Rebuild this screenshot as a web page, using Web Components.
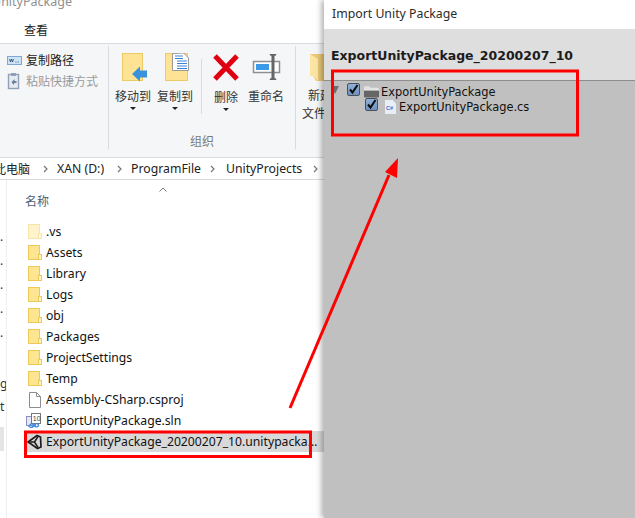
<!DOCTYPE html>
<html>
<head>
<meta charset="utf-8">
<style>
  html, body { margin: 0; padding: 0; background: #fff; }
  body { width: 635px; height: 518px; overflow: hidden; position: relative; font-family: "Noto Sans", "Noto Sans CJK SC", sans-serif; }
  #page { display: flex; width: 635px; height: 518px; }
</style>
</head>
<body>
<div id="page">
  <explorer-window>
    <ribbon-tool slot="tools" style="width:42px" label="移动到" menu>
      <svg width="30" height="30" viewBox="0 0 30 30"><rect x="4.500" y=".5" width="20" height="27" fill="#fde393" stroke="#eccb67"/><path d="M14 21l8-7.500v4h7v7h-7v4z" fill="#3a92dc"/></svg>
    </ribbon-tool>
    <ribbon-tool slot="tools" style="width:42px" label="复制到" menu>
      <svg width="30" height="30" viewBox="0 0 30 30"><rect x="5.500" y=".5" width="22" height="27" fill="#fde393" stroke="#eccb67"/><path d="M14.500.5h-2v17h16V5l-5-5z" fill="#fff" stroke="#9a9a9a"/><path d="M15 3h8M15 5.500h8M17 8h10M17 10.500h10M17 13h10M17 15.500h10" stroke="#3a82d0"/></svg>
    </ribbon-tool>
    <ribbon-tool slot="tools" style="width:40px;margin-left:10px" label="删除" menu shift>
      <svg width="28" height="30" viewBox="0 0 28 30"><path d="M3 3l22 23M25 3L3 26" stroke="#e10011" stroke-width="5"/></svg>
    </ribbon-tool>
    <ribbon-tool slot="tools" style="width:40px" label="重命名">
      <svg width="30" height="30" viewBox="0 0 30 30"><rect x="2.500" y="8.500" width="26" height="11" fill="#fff" stroke="#8f8f8f" stroke-width="1.500"/><rect x="5" y="11" width="13" height="6" fill="#3c9ae8"/><path d="M19 1.500h6l-2 2v21l2 2h-6l2-2v-21z" fill="#666" stroke="#666"/></svg>
    </ribbon-tool>
    <file-row kind="faded">.vs</file-row>
    <file-row>Assets</file-row>
    <file-row>Library</file-row>
    <file-row>Logs</file-row>
    <file-row>obj</file-row>
    <file-row>Packages</file-row>
    <file-row>ProjectSettings</file-row>
    <file-row>Temp</file-row>
    <file-row kind="doc">Assembly-CSharp.csproj</file-row>
    <file-row kind="sln">ExportUnityPackage.sln</file-row>
    <file-row kind="unity" selected>ExportUnityPackage_20200207_10.unitypackage</file-row>
  </explorer-window>
  <import-panel title-text="Import Unity Package" package="ExportUnityPackage_20200207_10">
    <tree-row kind="folder" arrow>ExportUnityPackage</tree-row>
    <tree-row kind="cs" indent>ExportUnityPackage.cs</tree-row>
  </import-panel>
</div>
<red-marks></red-marks>
<script>
const FONT = `"Noto Sans", "Noto Sans CJK SC", sans-serif`;

class RibbonTool extends HTMLElement {
  constructor() {
    super();
    const root = this.attachShadow({mode: 'open'});
    const shift = this.hasAttribute('shift') ? 1 : 0;
    root.innerHTML = `
      <style>
        :host { display: flex; flex-direction: column; align-items: center; flex: none; padding-top: 9px; }
        .icon { height: 30px; display: flex; justify-content: center; }
        .label { margin-top: ${6 + shift}px; font: 12px/16px ${FONT}; color: #333; white-space: nowrap; }
        .menu { width: 0; height: 0; margin-top: 2px; border: 3px solid transparent; border-top: 3px solid #222; border-bottom: 0; }
      </style>
      <div class="icon"><slot></slot></div>
      <div class="label">${this.getAttribute('label')}</div>
      ${this.hasAttribute('menu') ? '<div class="menu"></div>' : ''}
    `;
  }
}
customElements.define('ribbon-tool', RibbonTool);

const FILE_ICONS = {
  folder: `<svg width="14" height="16" viewBox="0 0 14 16"><rect x=".5" y=".5" width="11" height="14" fill="#fee592" stroke="#edc957"/><rect x="10.500" y="9.500" width="3" height="5" fill="#fff3c4" stroke="#edc957"/></svg>`,
  faded: `<svg width="14" height="16" viewBox="0 0 14 16"><rect x=".5" y=".5" width="11" height="14" fill="#fff3cb" stroke="#f6e4a8"/><rect x="10.500" y="9.500" width="3" height="5" fill="#fff8e2" stroke="#f6e4a8"/></svg>`,
  doc: `<svg width="14" height="16" viewBox="0 0 14 16"><path d="M1.500.5h7l4 4v11h-11z" fill="#fff" stroke="#8d8d8d"/><path d="M8.500.5v4h4" fill="none" stroke="#8d8d8d"/></svg>`,
  sln: `<svg width="16" height="16" viewBox="0 0 16 16" style="margin-left:-2px"><rect x=".5" y="3.500" width="9" height="9" fill="#e3e9f7" stroke="#8b8fc0"/><rect x="5.500" y=".5" width="9" height="10" fill="#fff" stroke="#777"/><text x="6.800" y="8" font-family="Liberation Sans" font-size="7" fill="#444">10</text><path d="M4 12c2-2.500 3-.5 4.500 1s4 1 4-.8-2.500-2.200-4-.2-3 3-4.500 2-1.200-1-0-2" fill="none" stroke="#3c87e0" stroke-width="1.400"/></svg>`,
  unity: `<svg width="15" height="16" viewBox="0 0 15 16" style="margin-left:-1px"><path d="M1 8L10 1.500l3.500 1.500 .5 10-3.500 1.500z" fill="none" stroke="#1d1d1d" stroke-width="1.700"/><path d="M7.500 8h-5M7.500 8l3.500-5.500M7.500 8l3.500 5.500" stroke="#1d1d1d" stroke-width="1.500"/></svg>`
};

class FileRow extends HTMLElement {
  constructor() {
    super();
    const root = this.attachShadow({mode: 'open'});
    const kind = this.getAttribute('kind') || 'folder';
    root.innerHTML = `
      <style>
        :host { display: flex; align-items: center; height: 21px; padding-left: 4px; gap: 4px; color: #111; font: 12.200px/21px ${FONT}; }
        :host([selected]) { background: #d9d9d9; }
        .ico { width: 14px; height: 16px; flex: none; display: flex; }
        .name { min-width: 0; width: 273px; white-space: nowrap; overflow: hidden; text-overflow: ellipsis; }
      </style>
      <span class="ico">${FILE_ICONS[kind]}</span>
      <span class="name"><slot></slot></span>
    `;
  }
}
customElements.define('file-row', FileRow);

const CHEVRON = '<svg viewBox="0 0 5 8"><path d="M1 1l3 3-3 3" fill="none" stroke="#777" stroke-width="1.200"/></svg>';

class ExplorerWindow extends HTMLElement {
  constructor() {
    super();
    const root = this.attachShadow({mode: 'open'});
    root.innerHTML = `
      <style>
        :host { display: flex; flex-direction: column; flex: none; width: 324px; height: 518px; overflow: hidden; background: #fff; color: #222; font-family: ${FONT}; }
        .title { height: 18px; flex: none; overflow: hidden; color: #8f8f8f; font-size: 12.500px; line-height: 16px; white-space: nowrap; }
        .title span { display: block; margin: -6px 0 0 -8px; }
        .tabs { height: 26px; flex: none; box-sizing: border-box; border-bottom: 1px solid #dadbdc; padding-left: 24px; font-size: 12px; line-height: 25px; }
        .ribbon { height: 114px; flex: none; box-sizing: border-box; display: flex; background: #f5f6f7; border-bottom: 1px solid #dadbdc; }
        .group { flex: none; box-sizing: border-box; margin: 2px 0 8px; border-right: 1px solid #dadbdc; display: flex; flex-direction: column; }
        .clip { width: 109px; padding: 4px 0 0 7px; font-size: 12px; line-height: 21px; }
        .clip div { display: flex; align-items: center; gap: 4px; height: 21px; }
        .clip .off { color: #9a9a9a; }
        .clip svg { width: 15px; height: 17px; flex: none; }
        .org { width: 187px; }
        .tools { display: flex; flex: 1; padding-left: 3px; position: relative; margin-top: -2px; }
        .tools::after { content: ""; position: absolute; left: 92px; top: 15px; width: 1px; height: 55px; background: #dadbdc; }
        .cap { text-align: center; color: #7b7b7b; font-size: 12px; line-height: 16px; margin-bottom: -1px; }
        .new { width: 40px; padding: 9px 0 0 6px; font-size: 12px; color: #333; }
        .new svg { display: block; margin: 0 0 1px 8px; }
        .new div:first-of-type { padding-left: 6px; margin-top: 5px; }
        .new div { white-space: nowrap; line-height: 18px; }
        .crumbs { height: 22px; flex: none; box-sizing: border-box; display: flex; align-items: center; border-bottom: 1px solid #dadbdc; font-size: 12.250px; color: #222; white-space: nowrap; }
        .crumbs svg { width: 5px; height: 8px; flex: none; margin: 0 9px; }
        .crumbs .pc { margin: 0 3px 0 -6px; font-size: 12px; width: 37px; flex: none; }
        .crumbs .xan { padding-right: 4px; }
        .crumbs .up { margin-left: 2px; padding-right: 2px; }
        .content { flex: 1; display: flex; min-height: 0; }
        nav { width: 6px; flex: none; border-right: 1px solid #eee; padding-top: 45px; font-size: 12px; color: #333; overflow: hidden; }
        nav div { height: 24px; line-height: 24px; white-space: nowrap; }
        nav .sel { background: #e5e5e5; width: 4px; margin-top: 8px; }
        .list { flex: 1; min-width: 0; padding-left: 17px; }
        .sort { height: 12px; display: flex; justify-content: center; padding: 7px 23px 0 0; box-sizing: border-box; }
        .head { height: 29px; color: #4c607a; font-size: 12px; line-height: 20px; padding-left: 1px; }
      </style>
      <div class="title"><span>UnityPackage</span></div>
      <div class="tabs">查看</div>
      <div class="ribbon">
        <div class="group clip">
          <div><svg viewBox="0 0 15 17"><rect x=".5" y="4.500" width="14" height="8" fill="#cfe3f7" stroke="#7fa7d0"/><path d="M2.500 7l1 3 1-3 1 3 1-3M8.500 10h1M10.800 10h1" fill="none" stroke="#25405f" stroke-width=".8"/></svg>复制路径</div>
          <div class="off"><svg viewBox="0 0 15 17"><rect x="1.500" y="1.500" width="10" height="14" fill="#e6ebf2" stroke="#8fa0b8" stroke-width="1.400"/><rect x="4" y="0" width="5" height="3" fill="#8fa0b8"/><path d="M4.500 9l3-3v2h2v2h-2l-1 2z" fill="#6f8199"/></svg>粘贴快捷方式</div>
        </div>
        <div class="group org">
          <div class="tools"><slot name="tools"></slot></div>
          <div class="cap">组织</div>
        </div>
        <div class="new">
          <svg width="20" height="29" viewBox="0 0 20 29"><path d="M0 1h20v27H6l-3-5H0z" fill="#e9c877"/><path d="M0 1l8 5v22l-5-5H0z" fill="#fce4a3"/></svg>
          <div>新建</div>
          <div>文件夹</div>
        </div>
      </div>
      <div class="crumbs">
        <span class="pc">此电脑</span>${CHEVRON}
        <span class="xan">XAN (D:)</span>${CHEVRON}
        <span>ProgramFile</span>${CHEVRON}
        <span class="up">UnityProjects</span>${CHEVRON}
      </div>
      <div class="content">
        <nav>
          <div>.</div><div>.</div><div>.</div><div>.</div><div>.</div>
          <div></div>
          <div style="margin-top:3px">g</div>
          <div style="margin-top:-1px">t</div>
          <div class="sel"></div>
        </nav>
        <div class="list">
          <div class="sort"><svg width="8" height="5" viewBox="0 0 8 5"><path d="M.5 4.500L4 1l3.500 3.500" fill="none" stroke="#777"/></svg></div>
          <div class="head">名称</div>
          <slot></slot>
        </div>
      </div>
    `;
  }
}
customElements.define('explorer-window', ExplorerWindow);

class TreeRow extends HTMLElement {
  constructor() {
    super();
    const root = this.attachShadow({mode: 'open'});
    const folder = `<svg width="15" height="13" viewBox="0 0 16 13"><path d="M0 2.500Q0 1 1.500 1h4L7 2.500h7.500Q16 2.500 16 4v8H0z" fill="#e2e2e2"/><path d="M0 5h16v6.500q0 1.500-1.500 1.500h-13Q0 13 0 11.500z" fill="#666"/><path d="M0 5h16" stroke="#ededed"/></svg>`;
    const cs = `<svg width="11" height="14" viewBox="0 0 11 14"><path d="M0 0h7.500L11 3.500V14H0z" fill="#e8eef6"/><text x="1" y="10" font-family="Liberation Sans" font-weight="bold" font-size="5.500" fill="#3c6fd0">C#</text></svg>`;
    const isCs = this.getAttribute('kind') === 'cs';
    root.innerHTML = `
      <style>
        :host { display: flex; align-items: flex-start; height: 15px; color: #111; font: 11.400px/15px "DejaVu Sans", sans-serif; white-space: nowrap; }
        :host([indent]) { padding-left: 41px; }
        .tri { width: 0; height: 0; margin: 3px 8px 0 7px; border-left: 4px solid transparent; border-right: 4px solid transparent; border-top: 8px solid #6e6e6e; flex: none; }
        .box { width: 13px; height: 13px; box-sizing: border-box; flex: none; background: linear-gradient(#8fb0d8, #6d92c0); border: 1px solid #4a4f58; border-radius: 2px; display: flex; }
        .ico { flex: none; display: flex; margin-top: 2px; margin-left: ${isCs ? 7 : 4}px; margin-right: ${isCs ? 3 : 2}px; }
        .txt { padding-top: 2px; }
      </style>
      ${this.hasAttribute('arrow') ? '<span class="tri"></span>' : ''}
      <span class="box"><svg width="11" height="11" viewBox="0 0 11 11"><path d="M2 5.500l2.500 3L9.500 1" fill="none" stroke="#0c0c0c" stroke-width="2"/></svg></span>
      <span class="ico">${isCs ? cs : folder}</span>
      <span class="txt"><slot></slot></span>
    `;
  }
}
customElements.define('tree-row', TreeRow);

class ImportPanel extends HTMLElement {
  constructor() {
    super();
    const root = this.attachShadow({mode: 'open'});
    root.innerHTML = `
      <style>
        :host { display: flex; flex-direction: column; flex: 1; min-width: 0; height: 518px; position: relative; background: #c0c0c0; box-shadow: -3px 0 5px rgba(0,0,0,.28); }
        .bar { height: 29px; flex: none; background: #fff; color: #2b2b2b; font: 12.300px/28px ${FONT}; padding-left: 8px; }
        .head { height: 52px; flex: none; box-sizing: border-box; background: #dedede; border-bottom: 1px solid #8e8e8e; padding: 16px 0 0 7px; color: #1c1c1c; font: bold 12.500px/22px "DejaVu Sans", sans-serif; white-space: nowrap; }
        .tree { padding-top: 2px; display: flex; flex-direction: column; }
      </style>
      <div class="bar">${this.getAttribute('title-text')}</div>
      <div class="head">${this.getAttribute('package')}</div>
      <div class="tree"><slot></slot></div>
    `;
  }
}
customElements.define('import-panel', ImportPanel);

// annotations drawn over the screenshot
class RedMarks extends HTMLElement {
  constructor() {
    super();
    const root = this.attachShadow({mode: 'open'});
    root.innerHTML = `
      <style>
        :host { position: absolute; left: 0; top: 0; width: 635px; height: 518px; display: block; pointer-events: none; }
        svg { display: block; }
      </style>
      <svg width="635" height="518" viewBox="0 0 635 518">
        <rect x="332.500" y="71" width="245" height="64" fill="none" stroke="#ff0000" stroke-width="3"/>
        <rect x="25.500" y="432" width="285" height="24.500" fill="none" stroke="#ff0000" stroke-width="3"/>
        <path d="M290 408L389 175" stroke="#ff0000" stroke-width="3" fill="none"/>
        <path d="M398 158L385 172L397 178z" fill="#ff0000"/>
      </svg>
    `;
  }
}
customElements.define('red-marks', RedMarks);
</script>
</body>
</html>
